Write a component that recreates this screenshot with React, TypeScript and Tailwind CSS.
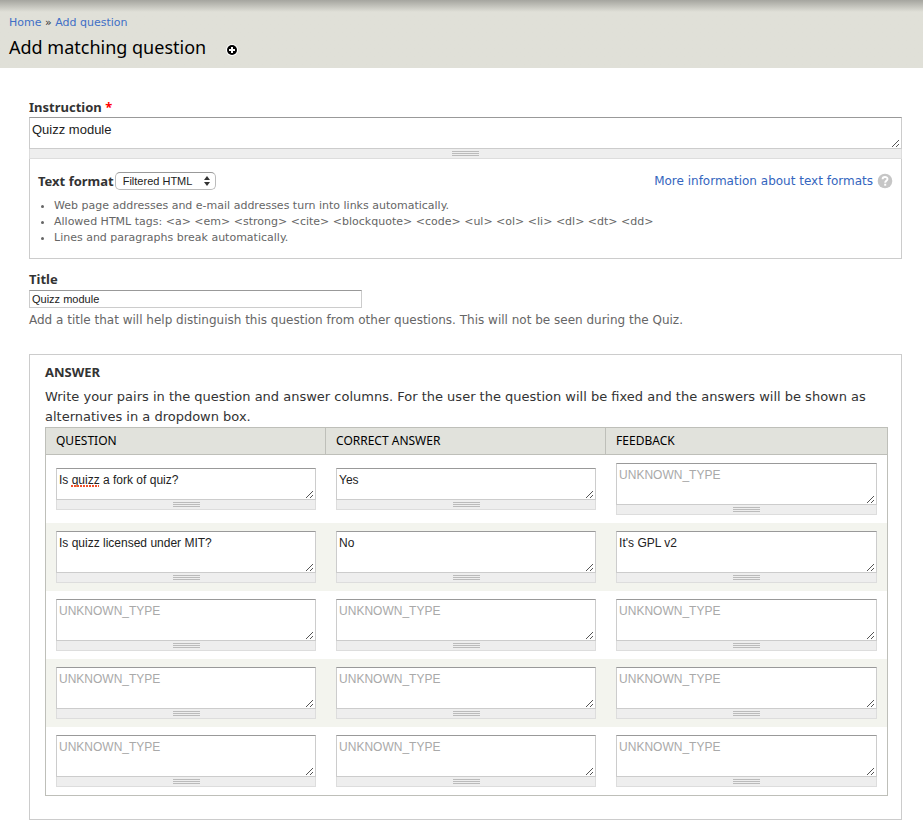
import React, { useState } from "react";
import clsx from "clsx";

type Cell = { value?: string; short?: boolean; misspelled?: boolean };

const columns = ["Question", "Correct answer", "Feedback"];

const pairs: Cell[][] = [
  [{ value: "Is quizz a fork of quiz?", short: true, misspelled: true }, { value: "Yes", short: true }, {}],
  [{ value: "Is quizz licensed under MIT?" }, { value: "No" }, { value: "It's GPL v2" }],
  [{}, {}, {}],
  [{}, {}, {}],
  [{}, {}, {}],
];

const tips = [
  "Web page addresses and e-mail addresses turn into links automatically.",
  "Allowed HTML tags: <a> <em> <strong> <cite> <blockquote> <code> <ul> <ol> <li> <dl> <dt> <dd>",
  "Lines and paragraphs break automatically.",
];

// Drag bar under every textarea
function Grippie() {
  return (
    <div className="flex h-[10px] justify-center border border-t-0 border-[#dddddd] bg-[#eeeeee] pt-[2px]">
      <div className="flex w-[27px] flex-col gap-px">
        <span className="h-px bg-[#bbbbbb]" />
        <span className="h-px bg-[#bbbbbb]" />
        <span className="h-px bg-[#bbbbbb]" />
      </div>
    </div>
  );
}

type ResizableProps = Cell & { id?: string; label?: string; large?: boolean };

function ResizableTextarea({ id, label, value, short, misspelled, large }: ResizableProps) {
  const [text, setText] = useState(value ?? "");
  return (
    <div className="relative">
      <textarea
        id={id}
        aria-label={label}
        value={text}
        placeholder="UNKNOWN_TYPE"
        spellCheck={false}
        onChange={(e) => setText(e.target.value)}
        className={clsx(
          "block w-full resize-none overflow-hidden border border-[#cccccc] border-t-[#999999] bg-white px-[2px] font-['Liberation_Sans',Arial,sans-serif] leading-4 text-[#222222] outline-none placeholder:text-[#a9a9a9]",
          large ? "py-1 text-[13px]" : "py-[3px] text-xs",
          short ? "h-8" : "h-[42px]"
        )}
      />
      {misspelled && (
        <svg viewBox="0 0 28 2" className="pointer-events-none absolute top-[17px] left-[15px] h-[2px] w-7">
          <path d="M0 1h28" stroke="#f0502a" strokeWidth="2" strokeDasharray="2 1" />
        </svg>
      )}
      <svg
        viewBox="0 0 8 8"
        shapeRendering="crispEdges"
        className="pointer-events-none absolute right-[2px] bottom-3 size-2 fill-[#555555]"
      >
        {[0, 1, 2, 3, 4, 5, 6].map((i) => (
          <rect key={i} x={i} y={7 - i} width="1" height="1" />
        ))}
        {[4, 5, 6].map((i) => (
          <rect key={i} x={i} y={11 - i} width="1" height="1" />
        ))}
      </svg>
      <Grippie />
    </div>
  );
}

function TextFormat() {
  return (
    <div className="border border-t-0 border-[#cccccc] px-2 py-3">
      <div className="flex items-center justify-between">
        <div className="flex items-center gap-px">
          <label htmlFor="format" className="font-['Noto_Sans',sans-serif] text-[13px] leading-5 font-bold">
            Text format
          </label>
          <div className="relative">
            <select
              id="format"
              className="block h-[18px] w-[101px] appearance-none rounded-[5px] border border-[#bbbbbb] border-t-[#999999] bg-white pl-[7px] font-['Liberation_Sans',Arial,sans-serif] text-[11px] leading-4 text-[#222222]"
            >
              <option>Filtered HTML</option>
              <option>Full HTML</option>
              <option>Plain text</option>
            </select>
            <svg viewBox="0 0 6 10" className="pointer-events-none absolute top-1 right-[6px] h-[10px] w-[6px] fill-[#333333]">
              <path d="M3 0 6 4H0zM3 10 0 6h6z" />
            </svg>
          </div>
        </div>
        <a href="#" className="flex items-center gap-1 text-xs leading-5 text-[#3465be]">
          More information about text formats
          <svg viewBox="0 0 16 16" className="size-4">
            <circle cx="8" cy="8" r="7.3" fill="#c6c6c6" />
            <path
              d="M5.6 6.3C5.6 3.2 10.5 3.3 10.5 6c0 1.7-2.3 1.9-2.3 3.7"
              fill="none"
              stroke="#fff"
              strokeWidth="1.9"
            />
            <rect x="7.2" y="10.7" width="2" height="2" fill="#fff" />
          </svg>
        </a>
      </div>
      <ul className="mt-[7px] list-disc pl-4 text-[11px] leading-4 text-[#666666]">
        {tips.map((tip) => (
          <li key={tip}>{tip}</li>
        ))}
      </ul>
    </div>
  );
}

function PairsTable() {
  return (
    <table className="w-full table-fixed border-separate border-spacing-0 border border-[#bebfb9]">
      <thead>
        <tr className="bg-[#e1e2dc]">
          {columns.map((c) => (
            <th
              key={c}
              className="w-[33.3%] border-r border-b border-[#bebfb9] px-[10px] py-[3px] text-left font-['Noto_Sans',sans-serif] text-xs leading-5 font-normal text-black uppercase last:w-auto last:border-r-0"
            >
              {c}
            </th>
          ))}
        </tr>
      </thead>
      <tbody>
        {pairs.map((row, i) => (
          <tr key={i} className="even:bg-[#f3f4ee]">
            {row.map((cell, j) => (
              <td key={j} className="px-[10px] py-2 align-middle">
                <ResizableTextarea label={`${columns[j]} ${i + 1}`} {...cell} />
              </td>
            ))}
          </tr>
        ))}
      </tbody>
    </table>
  );
}

export default function App() {
  const [title, setTitle] = useState("Quizz module");

  return (
    <div className="min-h-screen bg-white font-['DejaVu_Sans','Lucida_Grande',sans-serif] text-[#333333]">
      <header className="bg-[#e0e0d8] bg-linear-to-b from-[#a5a59f] to-[#e0e0d8] to-[12px] px-[9px] pt-[13px] pb-[7px]">
        <nav className="text-[11px] leading-5">
          <a href="#" className="text-[#3f6fc6]">Home</a> »{" "}
          <a href="#" className="text-[#3f6fc6]">Add question</a>
        </nav>
        <div className="flex items-center gap-5">
          <h1 className="font-['Noto_Sans',sans-serif] text-lg leading-7 text-black">Add matching question</h1>
          <button type="button" aria-label="Add to shortcuts" className="mt-[6px]">
            <svg viewBox="0 0 12 12" className="size-3">
              <circle cx="6" cy="6" r="6" fill="#fff" />
              <circle cx="6" cy="6" r="5" fill="#000" />
              <path d="M5 3h2v2h2v2H7v2H5V7H3V5h2z" fill="#fff" />
            </svg>
          </button>
        </div>
      </header>

      <form className="pt-[29px] pr-[21px] pb-2 pl-[29px]">
        <label htmlFor="instruction" className="block font-['Noto_Sans',sans-serif] text-[13px] leading-5 font-bold">
          Instruction <span className="text-[#ff0000]">*</span>
        </label>
        <ResizableTextarea id="instruction" value="Quizz module" short large />
        <TextFormat />

        <label htmlFor="title" className="mt-[10px] block font-['Noto_Sans',sans-serif] text-[13px] leading-5 font-bold">
          Title
        </label>
        <input
          id="title"
          type="text"
          value={title}
          onChange={(e) => setTitle(e.target.value)}
          className="mt-px block h-[18px] w-[333px] border border-[#cccccc] border-t-[#999999] px-[2px] font-['Liberation_Sans',Arial,sans-serif] text-[11px] text-[#222222] outline-none"
        />
        <p className="mt-[2px] text-xs leading-5 text-[#666666]">
          Add a title that will help distinguish this question from other questions. This will not be seen during the Quiz.
        </p>

        <section className="mt-6 border border-[#cccccc] pt-[7px] pr-[13px] pb-[23px] pl-[15px]">
          <h2 className="font-['Noto_Sans',sans-serif] text-[13px] leading-5 font-bold uppercase">Answer</h2>
          <p className="mt-[5px] text-[13px] leading-5">
            Write your pairs in the question and answer columns. For the user the question will be fixed and the answers
            will be shown as alternatives in a dropdown box.
          </p>
          <PairsTable />
        </section>
      </form>
    </div>
  );
}
